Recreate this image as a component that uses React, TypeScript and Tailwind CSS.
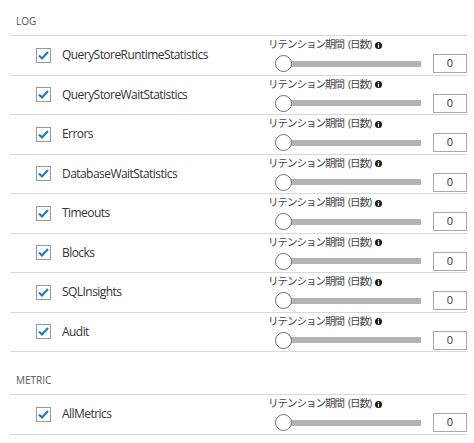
const logs = [
  'QueryStoreRuntimeStatistics',
  'QueryStoreWaitStatistics',
  'Errors',
  'DatabaseWaitStatistics',
  'Timeouts',
  'Blocks',
  'SQLInsights',
  'Audit',
]

const metrics = ['AllMetrics']

function CheckBox() {
  return (
    <span className="flex h-[15px] w-[15px] shrink-0 items-center justify-center border border-[#999] bg-white">
      <svg width="11" height="9" viewBox="0 0 11 9">
        <path d="M1 4.5 L4 7.5 L10 1" fill="none" stroke="#1777d0" strokeWidth="2" />
      </svg>
    </span>
  )
}

function InfoIcon() {
  return (
    <svg width="7" height="7" viewBox="0 0 8 8" className="shrink-0">
      <circle cx="4" cy="4" r="4" fill="#1a1a1a" />
      <rect x="3.3" y="3.3" width="1.4" height="3.2" fill="#fff" />
      <circle cx="4" cy="2" r="0.8" fill="#fff" />
    </svg>
  )
}

function Row({ name }: { name: string }) {
  return (
    <div className="flex h-[39.5px] border-t border-[#d9d9d9]">
      <div className="flex w-[258px] items-center gap-[11px] pl-[26px]">
        <CheckBox />
        <span className="text-[12px] tracking-[-0.55px] text-[#333]">{name}</span>
      </div>
      <div className="flex flex-col pt-[2px]">
        <div className="flex h-[14px] items-center text-[10.5px] tracking-[-1px] text-[#444]">
          <span>リテンション期間</span>
          <span className="ml-[4px]">(日数)</span>
          <span className="ml-[4px] flex">
            <InfoIcon />
          </span>
        </div>
        <div className="mt-[2px] flex h-[19px] items-center">
          <div className="relative ml-[7px] h-[17px] w-[146px]">
            <div className="absolute left-[8px] right-0 top-[5.5px] h-[6px] bg-[#b3b3b3]" />
            <div className="absolute left-0 top-0 h-[17px] w-[17px] rounded-full border border-[#6e6e6e] bg-white" />
          </div>
          <div className="ml-[12px] flex h-[19px] w-[34px] items-center justify-center border border-[#a9a9a9] bg-white text-[11px] text-[#333]">
            0
          </div>
        </div>
      </div>
    </div>
  )
}

function Section({ title, items, tall }: { title: string; items: string[]; tall?: boolean }) {
  return (
    <div>
      <div
        className={`flex items-end pb-[7px] pl-[6px] text-[10px] leading-[14px] text-[#555] ${
          tall ? 'h-[42px]' : 'h-[35px]'
        }`}
      >
        {title}
      </div>
      <div className="border-b border-[#d9d9d9]">
        {items.map((name) => (
          <Row key={name} name={name} />
        ))}
      </div>
    </div>
  )
}

export default function App() {
  return (
    <div
      className="h-[443px] w-[474px] bg-white pl-[10px] pr-[7px]"
      style={{ fontFamily: '"Open Sans", "Noto Sans CJK JP", sans-serif' }}
    >
      <Section title="LOG" items={logs} />
      <Section title="METRIC" items={metrics} tall />
    </div>
  )
}
